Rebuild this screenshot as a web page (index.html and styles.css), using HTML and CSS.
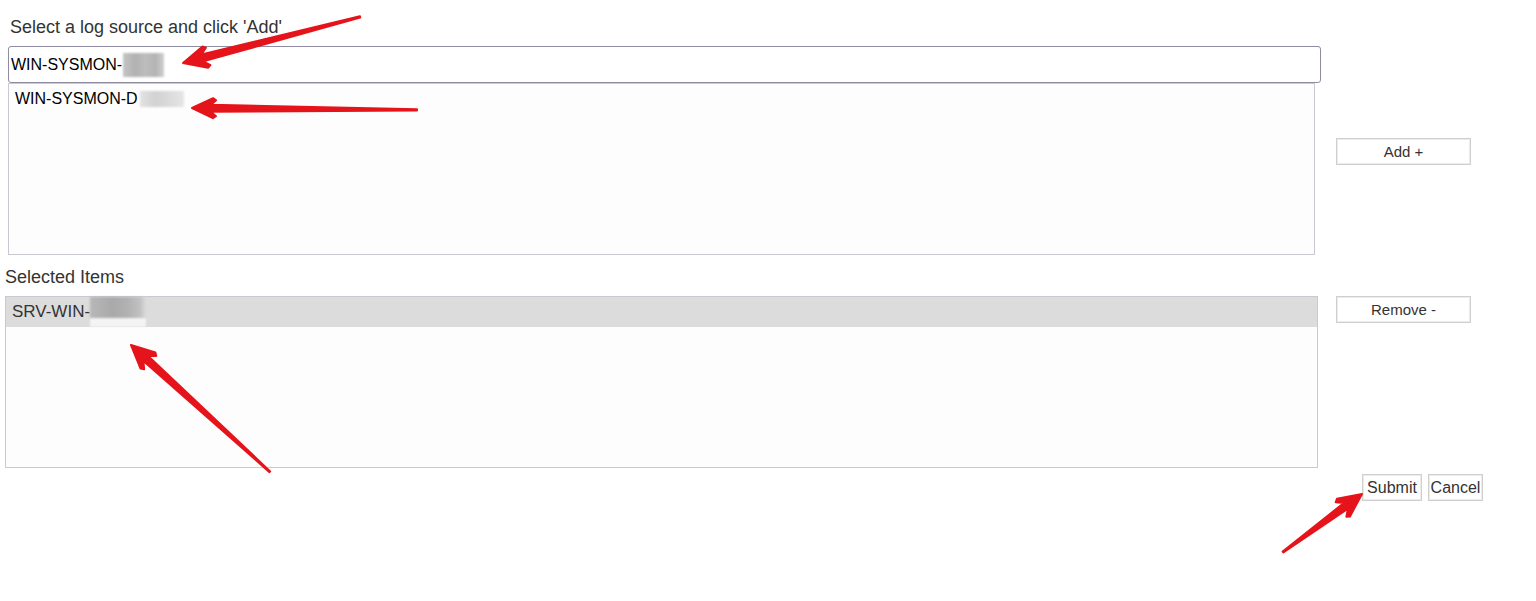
FILE: index.html
```html
<!DOCTYPE html>
<html>
<head>
<meta charset="utf-8">
<link rel="stylesheet" href="styles.css">
</head>
<body>
<div class="page">
  <div class="label label-first">Select a log source and click 'Add'</div>
  <div class="search">WIN-SYSMON-<span class="blur blur-a"></span></div>
  <div class="row row-source">
    <div class="listbox listbox-source">
      <div class="opt opt-source">WIN-SYSMON-D<span class="blur blur-b"></span></div>
    </div>
    <div class="side side-add"><button class="btn btn-wide">Add +</button></div>
  </div>
  <div class="label label-second">Selected Items</div>
  <div class="row row-selected">
    <div class="listbox listbox-selected">
      <div class="opt opt-selected">SRV-WIN-<span class="blur blur-c"></span></div>
    </div>
    <div class="side side-remove"><button class="btn btn-wide">Remove -</button></div>
  </div>
  <div class="actions">
    <button class="btn btn-small btn-submit">Submit</button>
    <button class="btn btn-small btn-cancel">Cancel</button>
  </div>
  <svg class="arrows" width="1536" height="601" viewBox="0 0 1536 601">
    <g class="arrow" transform="translate(183 63) rotate(-14.6)">
      <polygon points="0,0 23,-11 26,-9 20,-3.5 183,-0.6 183,0.6 20,3.5 26,9 23,11"/>
    </g>
    <g class="arrow" transform="translate(192 108) rotate(0.5)">
      <polygon points="0,0 21,-10 24,-8 19,-3.5 225,-0.6 225,0.6 19,3.5 24,8 21,10"/>
    </g>
    <g class="arrow" transform="translate(131 345) rotate(42.4)">
      <polygon points="0,0 23,-11 26,-9 20,-3.5 188,-0.5 188,0.5 20,3.5 26,9 23,11"/>
    </g>
    <g class="arrow" transform="translate(1362 494) rotate(143.7)">
      <polygon points="0,0 23,-11 26,-9 20,-3.5 98,-0.6 98,0.6 20,3.5 26,9 23,11"/>
    </g>
  </svg>
</div>
</body>
</html>
```

FILE: styles.css
```css
html, body {
  margin: 0;
  padding: 0;
  background: #ffffff;
}

.page {
  position: relative;
  width: 1536px;
  height: 601px;
  padding-top: 16px;
  box-sizing: border-box;
  font-family: "Liberation Sans", Arial, sans-serif;
  color: #333333;
  overflow: hidden;
}

.label {
  font-size: 18px;
  line-height: 22px;
  height: 22px;
  color: #333333;
}

.label-first {
  margin-left: 10px;
}

.label-second {
  margin-left: 5px;
  margin-top: 11px;
}

.search {
  margin: 8px 0 0 8px;
  width: 1313px;
  height: 37px;
  box-sizing: border-box;
  border: 1px solid #8f8ba0;
  border-radius: 3px;
  padding-left: 2px;
  font-size: 16px;
  line-height: 35px;
  color: #000000;
  display: flex;
  align-items: center;
}

.row {
  display: flex;
  align-items: flex-start;
}

.row-source {
  margin-left: 8px;
}

.row-selected {
  margin-left: 5px;
  margin-top: 8px;
}

.listbox {
  box-sizing: border-box;
  border: 1px solid #c8c9d2;
  background: #fdfdfd;
}

.listbox-source {
  width: 1307px;
  height: 172px;
}

.listbox-selected {
  width: 1313px;
  height: 172px;
}

.opt {
  height: 30px;
  padding-left: 6px;
  display: flex;
  align-items: center;
}

.opt-source {
  font-size: 16px;
  color: #000000;
}

.opt-selected {
  font-size: 17px;
  color: #333333;
  background: #dcdcdc;
}

.side-add {
  margin-left: 21px;
  padding-top: 55px;
}

.side-remove {
  margin-left: 18px;
}

.btn {
  font-family: "Liberation Sans", Arial, sans-serif;
  color: #333333;
  background: #ffffff;
  border: 1px solid #cfcfcf;
  box-shadow: inset 0 0 0 1px #ececec;
  padding: 0;
  margin: 0;
  cursor: pointer;
}

.btn-wide {
  width: 135px;
  height: 27px;
  font-size: 15px;
}

.actions {
  display: flex;
  justify-content: flex-end;
  gap: 6px;
  padding-right: 53px;
  margin-top: 6px;
}

.btn-small {
  height: 27px;
  font-size: 16px;
}

.btn-submit {
  width: 60px;
}

.btn-cancel {
  width: 55px;
}

.blur {
  display: inline-block;
  filter: blur(0.8px);
}

.blur-a {
  width: 41px;
  height: 24px;
  margin-left: 1px;
  background: linear-gradient(90deg, #c4c4c4 0%, #b2b2b2 30%, #bdbdbd 55%, #b4b4b4 80%, #d0d0d0 100%);
}

.blur-b {
  width: 44px;
  height: 16px;
  margin-left: 2px;
  background: linear-gradient(90deg, #e2e2e2 0%, #d2d2d2 35%, #dadada 65%, #e6e6e6 100%);
}

.blur-c {
  width: 56px;
  height: 30px;
  margin-left: 0;
  align-self: flex-start;
  background:
    linear-gradient(180deg, transparent 0%, transparent 70%, #f4f4f4 70%, #f4f4f4 100%),
    linear-gradient(90deg, #b8b8b8 0%, #a9a9a9 40%, #b3b3b3 70%, #c2c2c2 90%, #dcdcdc 100%);
}

.arrows {
  position: absolute;
  left: 0;
  top: 0;
  pointer-events: none;
}

.arrow polygon {
  fill: #e5141b;
  stroke: #e5141b;
  stroke-width: 2;
  stroke-linejoin: round;
}
```
